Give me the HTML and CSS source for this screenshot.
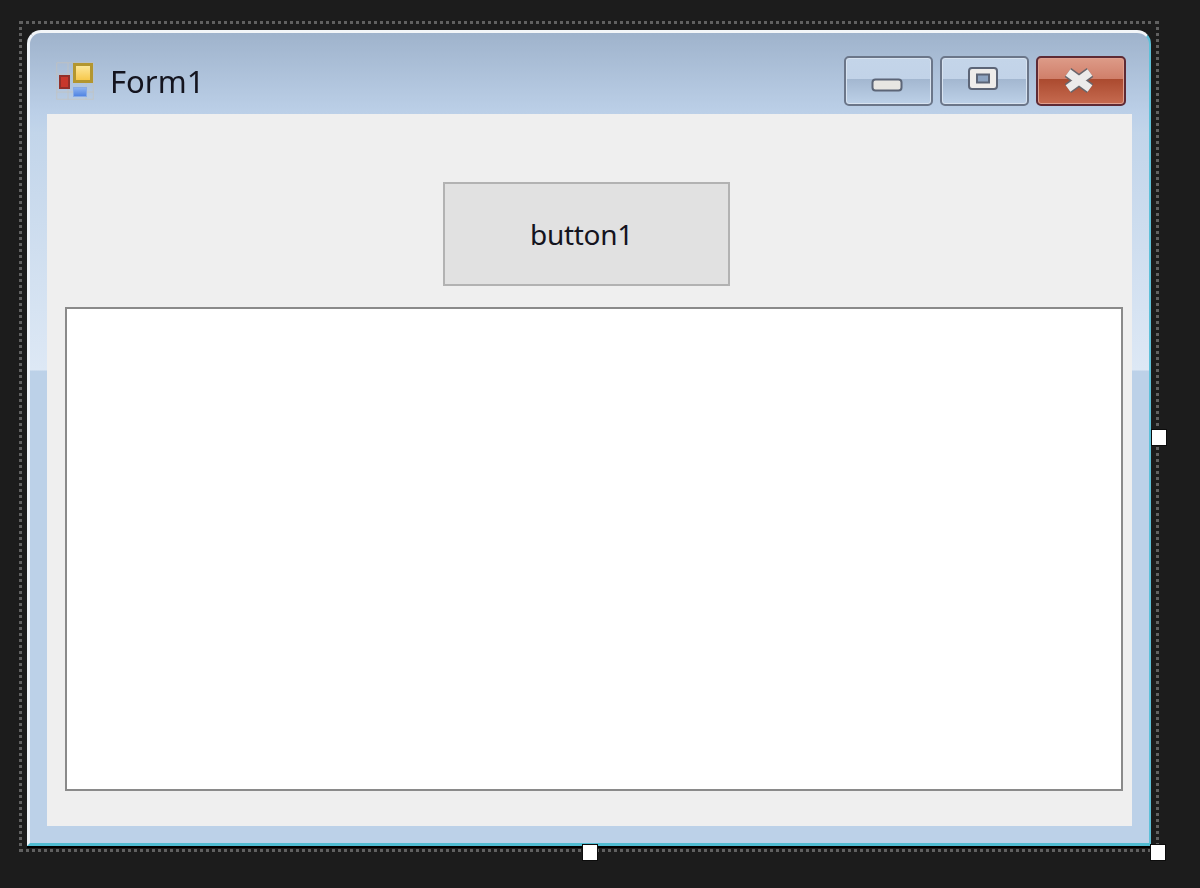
FILE: index.html
```html
<!DOCTYPE html>
<html lang="en">

<head>
    <meta charset="utf-8" />
    <title>Form1</title>
    <link rel="stylesheet" href="styles.css">
</head>

<body>
    <div class="selection">
        <div class="window">
            <div class="titlebar">
                <svg class="form-icon" width="38" height="38" viewBox="0 0 38 38">
                    <defs>
                        <linearGradient id="yellow" x1="0" y1="0" x2="0" y2="1">
                            <stop offset="0" stop-color="#fdeaa0" />
                            <stop offset="1" stop-color="#f6c544" />
                        </linearGradient>
                        <linearGradient id="blue" x1="0" y1="0" x2="0" y2="1">
                            <stop offset="0" stop-color="#8fb4f0" />
                            <stop offset="1" stop-color="#4d82e2" />
                        </linearGradient>
                    </defs>
                    <path d="M.75 .75h36.500v36.500h-36.500zM.75 12h36.500M.75 30h36.500M12 .75v36.500M30 .75v36.500" fill="none" stroke="#c4c3bc" stroke-width="1" opacity=".7" />
                    <rect x="18.500" y="2.500" width="17" height="17" fill="url(#yellow)" stroke="#b3962f" stroke-width="3" />
                    <rect x="4" y="14" width="9" height="12" fill="#c8382c" stroke="#92302a" stroke-width="2" />
                    <rect x="17.500" y="25.500" width="13" height="9" fill="url(#blue)" stroke="#86aae6" stroke-width="1" />
                </svg>
                <span class="caption">Form1</span>
                <div class="controls">
                    <div class="ctl">
                        <svg width="32" height="14" viewBox="0 0 32 14">
                            <rect x="1.500" y="1.500" width="29" height="11" rx="3" fill="#e8e6e2" stroke="#5c6577" stroke-width="2" />
                        </svg>
                    </div>
                    <div class="ctl ctl-max">
                        <svg width="32" height="25" viewBox="0 0 32 25">
                            <rect x="2" y="2" width="28" height="21" rx="3" fill="#eeecea" stroke="#5c6577" stroke-width="2" />
                            <rect x="10" y="8.500" width="12" height="8" fill="#8da3c0" stroke="#5c6577" stroke-width="2" />
                        </svg>
                    </div>
                    <div class="ctl ctl-close">
                        <svg width="34" height="27" viewBox="0 0 34 27">
                            <path d="M6 5.500L28 21.500M28 5.500L6 21.500" fill="none" stroke="#6a666c" stroke-width="11" />
                            <path d="M6 5.500L28 21.500M28 5.500L6 21.500" fill="none" stroke="#ecebea" stroke-width="8" />
                        </svg>
                    </div>
                </div>
            </div>
            <div class="client">
                <div class="button1">button1</div>
                <div class="textbox"></div>
            </div>
        </div>
        <div class="handle handle-right"></div>
        <div class="handle handle-bottom"></div>
        <div class="handle handle-corner"></div>
    </div>
</body>

</html>
```

FILE: styles.css
```css
html {
    height: 100%;
}

body {
    margin: 0;
    height: 100%;
    padding: 21px 0 0 19px;
    box-sizing: border-box;
    background: #1c1c1c;
    overflow: hidden;
    font-family: "Noto Sans", "Liberation Sans", sans-serif;
    color: #14141e;
}

.selection {
    position: relative;
    box-sizing: border-box;
    width: 1140px;
    height: 831px;
    padding: 6px 0 0 5px;
    border: 3px dotted #606060;
    filter: blur(0.7px);
}

.window {
    box-sizing: border-box;
    display: flex;
    flex-direction: column;
    width: 1124px;
    height: 816px;
    border-top: 3px solid #f2f5f8;
    border-left: 3px solid #f0f4f9;
    border-right: 2px solid #5fc0d8;
    border-bottom: 3px solid #50bcd2;
    border-radius: 14px 14px 0 0;
    background: linear-gradient(#9fb3cc 0, #bcd0e8 81px, #c2d5ea 100px, #dde8f5 337px, #bcd1e8 338px);
    box-shadow: 0 2px 0 #000;
}

.titlebar {
    display: flex;
    align-items: flex-start;
    height: 81px;
    padding: 0 23px 0 26px;
}

.form-icon {
    margin-top: 29px;
}

.caption {
    margin: 28px 0 0 16px;
    font-size: 31px;
    line-height: 40px;
}

.controls {
    display: flex;
    gap: 7px;
    margin: 23px 0 0 auto;
}

.ctl {
    box-sizing: border-box;
    display: flex;
    align-items: center;
    justify-content: center;
    width: 89px;
    height: 50px;
    border: 2px solid #6b7689;
    border-radius: 5px;
    box-shadow: inset 0 0 0 1px #d8e3f0;
    background: linear-gradient(#c4d5e9 0, #c2d3e8 45%, #a3b7d0 46%, #bdd1e8 100%);
}

.ctl svg {
    margin: 8px 4px 0 0;
}

.ctl-max svg {
    margin-top: -6px;
}

.ctl-close {
    width: 90px;
    border-color: #5e2a34;
    box-shadow: inset 0 0 0 1px #e0a090;
    background: linear-gradient(#dd9b88 0, #d07f6a 45%, #ab4a2f 46%, #c66b50 100%);
}

.ctl-close svg {
    margin-top: -2px;
}

.client {
    display: flex;
    flex-direction: column;
    align-items: flex-start;
    flex: 1;
    margin: 0 17px 17px 17px;
    background: #efefef;
}

.button1 {
    box-sizing: border-box;
    display: flex;
    align-items: center;
    justify-content: center;
    width: 287px;
    height: 104px;
    margin: 68px 0 0 396px;
    padding-right: 10px;
    border: 2px solid #b2b2b2;
    background: #e1e1e1;
    font-size: 28px;
    letter-spacing: -0.3px;
}

.textbox {
    box-sizing: border-box;
    width: 1058px;
    height: 484px;
    margin: 21px 0 0 18px;
    border: 2px solid #8a8a8a;
    background: #fff;
}

.handle {
    position: absolute;
    box-sizing: border-box;
    width: 14px;
    height: 15px;
    background: #fff;
    box-shadow: 0 0 0 1px #0c0c0c;
}

.handle-right {
    left: 1130px;
    top: 406px;
}

.handle-bottom {
    left: 561px;
    top: 821px;
}

.handle-corner {
    left: 1129px;
    top: 821px;
}
```
